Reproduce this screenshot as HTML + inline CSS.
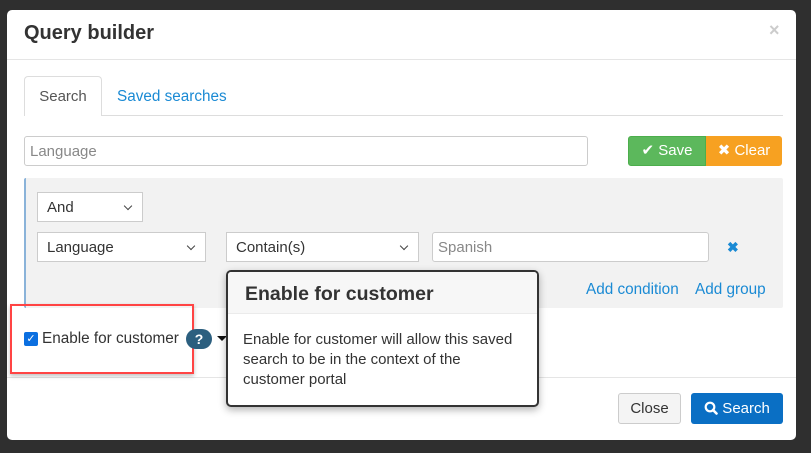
<!DOCTYPE html>
<html><head><meta charset="utf-8"><style>
*{box-sizing:border-box;margin:0;padding:0}
body{width:811px;height:453px;background:#2f2f2f;font-family:"Liberation Sans",sans-serif;position:relative;overflow:hidden;color:#333}
.a{position:absolute}
.modal{left:7px;top:10px;width:789px;height:430px;background:#fff;border-radius:5px}
.sel,.inp{position:absolute;background:#fff;border:1px solid #ccc;font-size:15px;color:#555;padding-left:9px;line-height:30px}
.sel::after{content:"";position:absolute;right:11px;top:10px;width:5px;height:5px;border-right:1.5px solid #444;border-bottom:1.5px solid #444;transform:rotate(45deg)}
.inp{border-radius:3px;padding-left:5px;color:#888}
.link{color:#1a8ad4;font-size:15.3px}
.btn{position:absolute;font-size:15px;color:#fff;text-align:center;line-height:30px}
</style></head><body>
<div class="a modal"></div>
<div class="a" style="left:24px;top:22px;font-size:20px;font-weight:bold;color:#333">Query builder</div>
<div class="a" style="left:769px;top:20px;font-size:18px;color:#ccc;font-weight:bold">×</div>
<div class="a" style="left:7px;top:59px;width:789px;height:1px;background:#e5e5e5"></div>
<div class="a" style="left:24px;top:115px;width:759px;height:1px;background:#ddd"></div>
<div class="a" style="left:24px;top:76px;width:78px;height:40px;border:1px solid #ddd;border-bottom:none;border-radius:4px 4px 0 0;background:#fff;font-size:15px;color:#555;text-align:center;line-height:40px">Search</div>
<div class="a link" style="left:117px;top:88px">Saved searches</div>
<div class="inp" style="left:24px;top:136px;width:564px;height:30px;line-height:29px">Language</div>
<div class="btn" style="left:628px;top:136px;width:78px;height:30px;background:#5cb85c;border:1px solid #4cae4c;border-radius:3px 0 0 3px;line-height:28px">✔ Save</div>
<div class="btn" style="left:706px;top:136px;width:76px;height:30px;background:#f7a121;border-radius:0 3px 3px 0">✖ Clear</div>
<div class="a" style="left:24px;top:178px;width:759px;height:130px;background:#f2f2f2;border-left:2px solid #8ab3d9;border-radius:2px"></div>
<div class="sel" style="left:37px;top:192px;width:106px;height:30px;color:#333">And</div>
<div class="sel" style="left:37px;top:232px;width:169px;height:30px;color:#333">Language</div>
<div class="sel" style="left:226px;top:232px;width:193px;height:30px;color:#333">Contain(s)</div>
<div class="inp" style="left:432px;top:232px;width:277px;height:30px;line-height:29px">Spanish</div>
<div class="a" style="left:727px;top:239px;color:#1a8ad4;font-size:14px;font-weight:bold">✖</div>
<div class="a link" style="left:586px;top:281px">Add condition</div>
<div class="a link" style="left:695px;top:281px">Add group</div>
<div class="a" style="left:7px;top:377px;width:789px;height:1px;background:#e5e5e5"></div>
<div class="btn" style="left:618px;top:393px;width:63px;height:31px;background:#f4f4f4;border:1px solid #ccc;border-radius:3px;color:#333">Close</div>
<div class="btn" style="left:691px;top:393px;width:92px;height:31px;background:#0a6fc4;border-radius:3px;line-height:31px"><svg width="14" height="14" viewBox="0 0 14 14" style="vertical-align:-2px"><circle cx="6" cy="6" r="4.3" fill="none" stroke="#fff" stroke-width="2.2"/><path d="M9 9l3.5 3.5" stroke="#fff" stroke-width="2.6" stroke-linecap="round"/></svg> Search</div>
<div class="a" style="left:10px;top:304px;width:184px;height:70px;border:2px solid #f44;box-shadow:0 2px 4px rgba(0,0,0,.25)"></div>
<div class="a" style="left:24px;top:332px;width:14px;height:14px;background:#0b6fe0;border-radius:2px;color:#fff;font-size:11px;line-height:14px;text-align:center">✓</div>
<div class="a" style="left:42px;top:330px;font-size:15.3px">Enable for customer</div>
<div class="a" style="left:186px;top:329px;width:26px;height:20px;border-radius:10px;background:#2c5f7f;color:#fff;font-weight:bold;font-size:14px;text-align:center;line-height:20px">?</div>
<div class="a" style="left:217px;top:336px;width:0;height:0;border-left:5px solid transparent;border-right:5px solid transparent;border-top:5px solid #111"></div>
<div class="a" style="left:226px;top:270px;width:313px;height:137px;border:2px solid #333;border-radius:5px;background:#fff;box-shadow:0 3px 8px rgba(0,0,0,.3);overflow:hidden">
<div style="height:42px;background:#f7f7f7;border-bottom:1px solid #ebebeb;font-size:19.5px;font-weight:bold;padding:11px 0 0 17px">Enable for customer</div>
<div style="font-size:15px;line-height:20px;padding:16px 18px 0 15px">Enable for customer will allow this saved search to be in the context of the customer portal</div>
</div>
</body></html>
